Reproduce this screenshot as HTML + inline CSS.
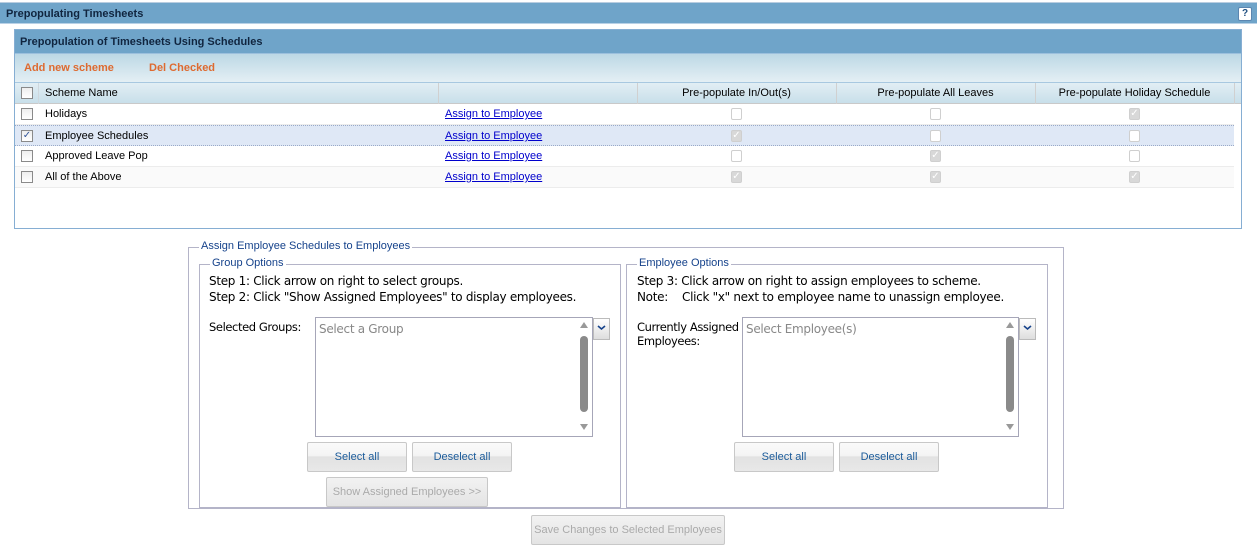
<!DOCTYPE html>
<html><head><meta charset="utf-8"><style>
*{box-sizing:border-box;margin:0;padding:0}
body{width:1257px;height:541px;background:#fff;position:relative;overflow:hidden;font-family:"Liberation Sans",sans-serif;font-size:11px;color:#000}
.a{position:absolute}
.bar{left:0;top:2px;width:1257px;height:22px;background:#6fa4c9;border-top:1px solid #b9cde0;border-bottom:1px solid #b9d1e6}
.t{font-weight:bold;color:#10253f;font-size:11px}
.panel{left:14px;top:29px;width:1228px;height:200px;border:1px solid #86aed3}
.ph{left:0;top:0;width:1226px;height:24px;background:#6fa4c9;border-bottom:1px solid #9cc0dd}
.tb{left:0;top:24px;width:1226px;height:28px;background:linear-gradient(#bcd8e5,#e4eff4)}
.lnk{color:#de6a30;font-weight:bold;font-size:11px}
.th{left:0;top:52px;width:1226px;height:22px;background:linear-gradient(#e2eef4,#c8dfea);border-top:1px solid #a8c8e0;border-bottom:1px solid #c9c9c9}
.row{left:0;width:1219px;height:21px;border-bottom:1px solid #ececec}
.cell{position:absolute;top:0;height:100%;line-height:20px}
.cb{position:absolute;width:12px;height:12px;border:1px solid #8a8a8a;background:linear-gradient(#eee,#fff)}
.dcb{position:absolute;width:11px;height:12px;border:1px solid #cfcfcf;border-radius:2px;background:#fff}
.dcb.c{background:#d8d8d8;color:#fff;font-size:10px;line-height:10px;text-align:center}
.sep{position:absolute;top:0;width:1px;height:21px;background:#d0d0d0}
.al{text-decoration:underline;color:#0000cc}
fieldset{position:absolute;border:1px solid #b4b4c8}
.lg{position:absolute;background:#fff;color:#15428b;padding:0 2px;font-family:"Liberation Sans",sans-serif;font-size:11px}
.st{position:absolute;font-family:"DejaVu Sans",sans-serif;font-size:12px;letter-spacing:-0.3px;white-space:nowrap}
.lb{position:absolute;border:1px solid #a6a6b8;background:#fff}
.btn{position:absolute;border:1px solid #c8c8c8;border-radius:2px;background:linear-gradient(#fafafa 0,#f4f4f4 45%,#e2e2e2 50%,#e8e8e8 100%);color:#1b5b9a;text-align:center;line-height:28px;font-family:"Liberation Sans",sans-serif;font-size:11px;white-space:nowrap;overflow:hidden}
.dis{color:#aaa;background:linear-gradient(#f2f2f2,#e4e4e4)}
</style></head><body>
<div class="a bar"><span class="a t" style="left:6px;top:5px">Prepopulating Timesheets</span>
<div class="a" style="left:1238px;top:4px;width:14px;height:14px;background:#fff;border:1px solid #5b86b0;border-radius:2px;color:#1f4f80;font-weight:bold;font-size:10px;text-align:center;line-height:12px">?</div></div>
<div class="a panel">
<div class="a ph"><span class="a t" style="left:5px;top:6px">Prepopulation of Timesheets Using Schedules</span></div>
<div class="a tb"><span class="a lnk" style="left:9px;top:8px">Add new scheme</span><span class="a lnk" style="left:134px;top:8px">Del Checked</span></div>
<div class="a th">
<div class="cb" style="left:6px;top:4px"></div>
<div class="sep" style="left:23px;top:0;background:#cfd8de"></div>
<span class="a" style="left:30px;top:4px">Scheme Name</span>
<div class="sep" style="left:423px"></div>
<div class="sep" style="left:622px"></div><span class="a" style="left:622px;width:199px;text-align:center;top:4px">Pre-populate In/Out(s)</span>
<div class="sep" style="left:821px"></div><span class="a" style="left:821px;width:199px;text-align:center;top:4px">Pre-populate All Leaves</span>
<div class="sep" style="left:1020px"></div><span class="a" style="left:1020px;width:199px;text-align:center;top:4px">Pre-populate Holiday Schedule</span>
<div class="sep" style="left:1219px"></div>
</div>
<div class="a row" style="top:74px">
<div class="cb" style="left:6px;top:4px"></div><span class="cell" style="left:30px">Holidays</span><span class="cell al" style="left:430px">Assign to Employee</span>
<div class="dcb" style="left:716px;top:4px"></div><div class="dcb" style="left:915px;top:4px"></div><div class="dcb c" style="left:1114px;top:4px">✓</div></div>
<div class="a row" style="top:95px;background:#dfe8f6;border-top:1px dotted #9aaac8;border-bottom:1px dotted #9aaac8">
<div class="cb" style="left:6px;top:4px;font-size:10px;line-height:10px;text-align:center;color:#33569a">✓</div><span class="cell" style="left:30px">Employee Schedules</span><span class="cell al" style="left:430px">Assign to Employee</span>
<div class="dcb c" style="left:716px;top:4px">✓</div><div class="dcb" style="left:915px;top:4px"></div><div class="dcb" style="left:1114px;top:4px"></div></div>
<div class="a row" style="top:116px">
<div class="cb" style="left:6px;top:4px"></div><span class="cell" style="left:30px">Approved Leave Pop</span><span class="cell al" style="left:430px">Assign to Employee</span>
<div class="dcb" style="left:716px;top:4px"></div><div class="dcb c" style="left:915px;top:4px">✓</div><div class="dcb" style="left:1114px;top:4px"></div></div>
<div class="a row" style="top:137px;background:#fafafa">
<div class="cb" style="left:6px;top:4px"></div><span class="cell" style="left:30px">All of the Above</span><span class="cell al" style="left:430px">Assign to Employee</span>
<div class="dcb c" style="left:716px;top:4px">✓</div><div class="dcb c" style="left:915px;top:4px">✓</div><div class="dcb c" style="left:1114px;top:4px">✓</div></div>
</div>

<fieldset style="left:188px;top:247px;width:876px;height:262px"></fieldset>
<span class="lg" style="left:199px;top:240px">Assign Employee Schedules to Employees</span>
<fieldset style="left:199px;top:264px;width:422px;height:244px"></fieldset>
<span class="lg" style="left:210px;top:257px">Group Options</span>
<fieldset style="left:626px;top:264px;width:422px;height:244px"></fieldset>
<span class="lg" style="left:637px;top:257px">Employee Options</span>

<div class="st" style="left:209px;top:274px">Step 1: Click arrow on right to select groups.</div>
<div class="st" style="left:209px;top:290px">Step 2: Click "Show Assigned Employees" to display employees.</div>
<div class="st" style="left:209px;top:320px;font-size:11.5px;letter-spacing:-0.4px">Selected Groups:</div>
<div class="lb" style="left:315px;top:317px;width:278px;height:120px"><span class="a st" style="left:3px;top:4px;color:#888;font-size:12px">Select a Group</span>
<div class="a" style="left:264px;top:18px;width:8px;height:76px;background:#8a8a8a;border-radius:4px"></div>
<div class="a" style="left:264px;top:4px;width:0;height:0;border:4px solid transparent;border-bottom:6px solid #999;border-top:0"></div>
<div class="a" style="left:264px;top:106px;width:0;height:0;border:4px solid transparent;border-top:6px solid #999;border-bottom:0"></div></div>
<div class="a" style="left:593px;top:318px;width:17px;height:22px;border:1px solid #bbb;background:linear-gradient(#fff,#ddd)"><svg width="15" height="20"><path d="M4 7l3.5 3 3.5-3" stroke="#15428b" stroke-width="1.6" fill="none"/></svg></div>
<div class="btn" style="left:307px;top:442px;width:100px;height:30px">Select all</div>
<div class="btn" style="left:412px;top:442px;width:100px;height:30px">Deselect all</div>
<div class="btn dis" style="left:326px;top:477px;width:162px;height:30px">Show Assigned Employees &gt;&gt;</div>

<div class="st" style="left:637px;top:274px">Step 3: Click arrow on right to assign employees to scheme.</div>
<div class="st" style="left:637px;top:290px">Note:&nbsp;&nbsp;&nbsp; Click "x" next to employee name to unassign employee.</div>
<div class="st" style="left:637px;top:320px;font-size:11.5px;letter-spacing:-0.4px;line-height:14px">Currently Assigned<br>Employees:</div>
<div class="lb" style="left:742px;top:317px;width:277px;height:120px"><span class="a st" style="left:3px;top:4px;color:#888;font-size:12px">Select Employee(s)</span>
<div class="a" style="left:263px;top:18px;width:8px;height:76px;background:#8a8a8a;border-radius:4px"></div>
<div class="a" style="left:263px;top:4px;width:0;height:0;border:4px solid transparent;border-bottom:6px solid #999;border-top:0"></div>
<div class="a" style="left:263px;top:106px;width:0;height:0;border:4px solid transparent;border-top:6px solid #999;border-bottom:0"></div></div>
<div class="a" style="left:1019px;top:318px;width:17px;height:22px;border:1px solid #bbb;background:linear-gradient(#fff,#ddd)"><svg width="15" height="20"><path d="M4 7l3.5 3 3.5-3" stroke="#15428b" stroke-width="1.6" fill="none"/></svg></div>
<div class="btn" style="left:734px;top:442px;width:100px;height:30px">Select all</div>
<div class="btn" style="left:839px;top:442px;width:100px;height:30px">Deselect all</div>

<div class="btn dis" style="left:531px;top:515px;width:194px;height:30px">Save Changes to Selected Employees</div>
</body></html>
